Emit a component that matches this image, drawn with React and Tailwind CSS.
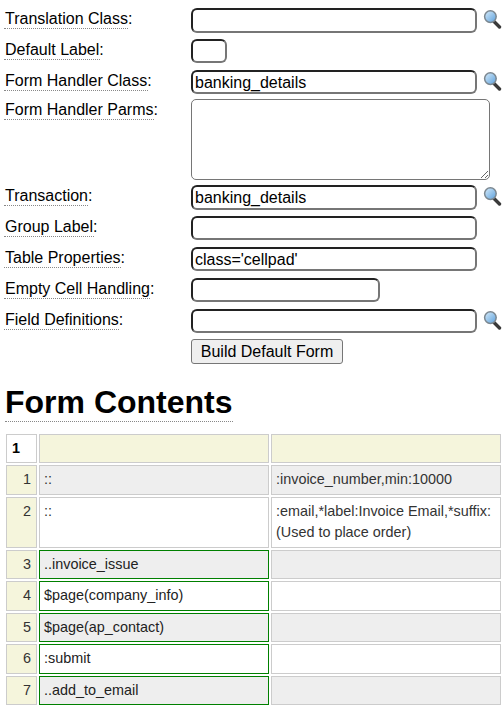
import React from "react";

function Lookup() {
  return (
    <svg width="19" height="20" viewBox="0 0 19 20" className="ml-[6px] shrink-0 mt-[1px]">
      <defs>
        <linearGradient id="lens" x1="0" y1="0" x2="1" y2="1">
          <stop offset="0" stopColor="#d8ecfa" />
          <stop offset="1" stopColor="#5a9fdc" />
        </linearGradient>
      </defs>
      <path d="M11 12.5L16.5 18" stroke="#3a3a3a" strokeWidth="3.4" strokeLinecap="round" />
      <circle cx="7.4" cy="7.6" r="5.8" fill="url(#lens)" stroke="#7b8790" strokeWidth="1.5" />
    </svg>
  );
}

function Label({ children }) {
  return (
    <div className="w-[187px] shrink-0 h-[21px] leading-none pt-px">
      <span className="inline-block h-[20px] leading-[19px] border-b border-dotted border-[#888]">
        <span className="inline-block -mr-[4px] pl-px whitespace-nowrap">{children}</span>
      </span>
    </div>
  );
}

const inputCls =
  "h-[24.6px] rounded-[6px] border-2 border-t-[#222] border-l-[#222] border-b-[#767676] border-r-[#767676] px-[2px] pt-px bg-white text-[16px] outline-none";

function Row({ label, value = "", width = "w-[286px]", lookup }) {
  return (
    <div className="flex">
      <Label>{label}</Label>
      <input readOnly defaultValue={value} className={`${inputCls} ${width}`} />
      {lookup && <Lookup />}
    </div>
  );
}

const rows = [
  { n: 1, a: "::", b: ":invoice_number,min:10000", h: "h-[30px]", bg: "bg-[#eeeeee]" },
  { n: 2, a: "::", b: ":email,*label:Invoice Email,*suffix:", b2: "(Used to place order)", h: "h-[51px]", bg: "bg-white" },
  { n: 3, a: "..invoice_issue", h: "h-[29px]", bg: "bg-[#eeeeee]", green: true },
  { n: 4, a: "$page(company_info)", h: "h-[30px]", bg: "bg-white", green: true },
  { n: 5, a: "$page(ap_contact)", h: "h-[29px]", bg: "bg-[#eeeeee]", green: true },
  { n: 6, a: ":submit", h: "h-[30px]", bg: "bg-white", green: true },
  { n: 7, a: "..add_to_email", h: "h-[29px]", bg: "bg-[#eeeeee]", green: true },
];

export default function App() {
  return (
    <div className="bg-white text-black min-h-screen font-['Liberation_Sans',Arial,sans-serif] text-[16px] pl-[4px] pt-[8px] overflow-hidden">
      {/* FORM FIELDS */}
      <div className="flex flex-col gap-[6.3px]">
        <Row label="Translation Class:" lookup />
        <Row label="Default Label:" width="w-[36px]" />
        <Row label="Form Handler Class:" value="banking_details" lookup />
        <div className="flex -mt-[1.5px] -mb-[1.5px]">
          <Label>Form Handler Parms:</Label>
          <textarea readOnly className="w-[299px] h-[81px] rounded-[5px] border border-[#767676] bg-white outline-none" />
        </div>
        <Row label="Transaction:" value="banking_details" lookup />
        <Row label="Group Label:" />
        <Row label="Table Properties:" value="class='cellpad'" />
        <Row label="Empty Cell Handling:" width="w-[189px]" />
        <Row label="Field Definitions:" lookup />
        <div className="pl-[187px]">
          <button className="h-[25px] w-[152px] rounded-[3px] border border-[#767676] bg-[#efefef] text-[16px] leading-none">
            Build Default Form
          </button>
        </div>
      </div>

      {/* FORM CONTENTS */}
      <h1 className="mt-[19.5px] block w-fit text-[32px] leading-[37px] font-bold border-b border-dotted border-[#888] ml-px">
        Form Contents
      </h1>

      <table className="mt-[10px] border-separate border-spacing-[2px] table-fixed w-[499px] text-[14.4px] text-[#333]">
        <colgroup>
          <col className="w-[31px]" />
          <col className="w-[230px]" />
          <col className="w-[230px]" />
        </colgroup>
        <tbody>
          <tr className="h-[29px]">
            <td className="border border-[#cccccc] bg-white text-black font-bold px-[5px]">1</td>
            <td className="border border-[#cccccc] bg-[#f5f5dc]" />
            <td className="border border-[#cccccc] bg-[#f5f5dc]" />
          </tr>
          {rows.map((r) => (
            <tr key={r.n} className={r.h}>
              <td className="border border-[#cccccc] bg-[#f5f5dc] text-right align-top pt-[3px] px-[5px] leading-[21px]">{r.n}</td>
              <td className={`border ${r.green ? "border-[#008000] text-[#222]" : "border-[#cccccc]"} ${r.bg} align-top pt-[3px] px-[4px] leading-[21px]`}>
                {r.a}
              </td>
              <td className={`border border-[#cccccc] ${r.bg} align-top pt-[3px] px-[4px] leading-[21px] whitespace-nowrap`}>
                {r.b}
                {r.b2 && <br />}
                {r.b2}
              </td>
            </tr>
          ))}
        </tbody>
      </table>
    </div>
  );
}
